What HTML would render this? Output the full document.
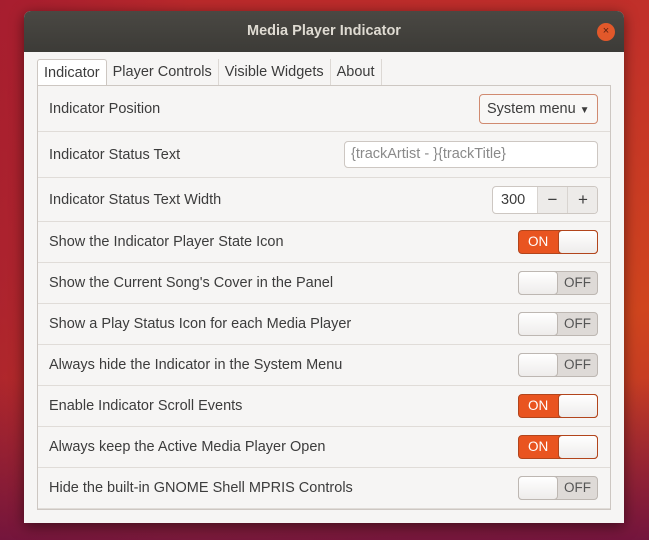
<!DOCTYPE html>
<html><head><meta charset="utf-8"><style>
*{box-sizing:border-box;margin:0;padding:0}
body{width:649px;height:540px;overflow:hidden;position:relative;font-family:"Liberation Sans","DejaVu Sans",sans-serif;
background:linear-gradient(160deg,#b8272c 0%,#c2312a 35%,#d0451e 70%,#b32d2e 100%);}
.bg2{position:absolute;left:0;top:0;width:649px;height:540px;background:linear-gradient(0deg,rgba(100,15,65,.8) 0%,rgba(110,20,70,0) 30%),linear-gradient(90deg,rgba(150,20,50,.5) 0%,rgba(0,0,0,0) 30%);}
.win{position:absolute;left:24px;top:11px;width:600px;height:512px;background:#f6f5f4;border-radius:7px 7px 0 0;box-shadow:0 3px 14px rgba(0,0,0,.5);overflow:hidden}
.title{height:41px;background:linear-gradient(#4a4843,#3c3b37);color:#dfdbd2;font-weight:bold;font-size:14.5px;text-align:center;line-height:41px}
.close{position:absolute;left:573px;top:12px;width:18px;height:18px;border-radius:50%;background:#e2582a;color:#5a2010;font-size:11px;line-height:17px;text-align:center}
.tabs{position:absolute;left:13px;top:48px;height:26px;display:flex;font-size:14.5px;color:#3c3c3c}
.tab{padding:0 6px;line-height:26px;border-right:1px solid #dcd8d4}
.tab.a{background:#fff;border:1px solid #cdc7c2;border-bottom:none;border-radius:3px 3px 0 0;height:27px}
.frame{position:absolute;left:13px;top:74px;width:574px;height:425px;border:1px solid #cdc7c2;background:#f6f5f4}
.row{position:absolute;left:0;width:572px;border-bottom:1px solid #e0dcd8;font-size:14.5px;color:#3c3c3c}
.row .l{position:absolute;left:11px;top:50%;transform:translateY(-50%)}
.sw{position:absolute;left:480px;width:80px;height:24px;border-radius:4px;top:50%;transform:translateY(-50%);font-size:13.5px}
.on{background:#e95420;border:1px solid #b2451c;color:#fff}
.on span{position:absolute;left:9px;top:3px}
.on i{position:absolute;right:-1px;top:-1px;width:40px;height:24px;background:linear-gradient(#fff,#eeeceb);border:1px solid #b2451c;border-radius:4px}
.off{background:#dedad7;border:1px solid #bdb7b2;color:#555}
.off span{position:absolute;right:6px;top:3px}
.off i{position:absolute;left:-1px;top:-1px;width:40px;height:24px;background:linear-gradient(#fff,#eeeceb);border:1px solid #bdb7b2;border-radius:4px}
</style></head><body><div class="bg2"></div>
<div class="win">
<div class="title">Media Player Indicator</div>
<div class="close">×</div>
<div class="tabs"><div class="tab a">Indicator</div><div class="tab">Player Controls</div><div class="tab">Visible Widgets</div><div class="tab">About</div></div>
<div class="frame">
<div class="row" style="top:0;height:46px"><div class="l">Indicator Position</div>
<div style="position:absolute;left:441px;top:8px;width:119px;height:30px;border:1px solid #d08a70;border-radius:4px;background:#f8f7f6;line-height:28px;padding-left:7px;font-size:14.5px">System menu <span style="font-size:10px">▼</span></div></div>
<div class="row" style="top:46px;height:46px"><div class="l">Indicator Status Text</div>
<div style="position:absolute;left:306px;top:9px;width:254px;height:27px;border:1px solid #cdc7c2;border-radius:4px;background:#fff;line-height:25px;padding-left:6px;color:#8a8a8a">{trackArtist - }{trackTitle}</div></div>
<div class="row" style="top:92px;height:44px"><div class="l">Indicator Status Text Width</div>
<div style="position:absolute;left:454px;top:8px;width:106px;height:28px;border:1px solid #cdc7c2;border-radius:4px;background:#fff;overflow:hidden">
<div style="position:absolute;left:8px;top:5px">300</div>
<div style="position:absolute;left:44px;top:0;width:30px;height:26px;background:#edebe9;border-left:1px solid #d8d4d0;text-align:center;line-height:25px;font-size:17px">−</div>
<div style="position:absolute;left:74px;top:0;width:31px;height:26px;background:#edebe9;border-left:1px solid #d8d4d0;text-align:center;line-height:25px;font-size:17px">+</div></div></div>
<div class="row" style="top:136px;height:41px"><div class="l">Show the Indicator Player State Icon</div><div class="sw on"><span>ON</span><i></i></div></div>
<div class="row" style="top:177px;height:41px"><div class="l">Show the Current Song's Cover in the Panel</div><div class="sw off"><span>OFF</span><i></i></div></div>
<div class="row" style="top:218px;height:41px"><div class="l">Show a Play Status Icon for each Media Player</div><div class="sw off"><span>OFF</span><i></i></div></div>
<div class="row" style="top:259px;height:41px"><div class="l">Always hide the Indicator in the System Menu</div><div class="sw off"><span>OFF</span><i></i></div></div>
<div class="row" style="top:300px;height:41px"><div class="l">Enable Indicator Scroll Events</div><div class="sw on"><span>ON</span><i></i></div></div>
<div class="row" style="top:341px;height:41px"><div class="l">Always keep the Active Media Player Open</div><div class="sw on"><span>ON</span><i></i></div></div>
<div class="row" style="top:382px;height:41px"><div class="l">Hide the built-in GNOME Shell MPRIS Controls</div><div class="sw off"><span>OFF</span><i></i></div></div>
</div></div>
</body></html>
